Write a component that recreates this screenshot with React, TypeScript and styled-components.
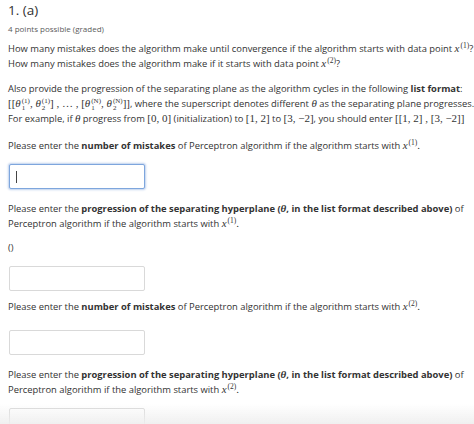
import styled, { createGlobalStyle } from 'styled-components'

const GlobalStyle = createGlobalStyle`
  html, body {
    margin: 0;
    padding: 0;
    background: #fff;
    overflow: hidden;
  }
  body {
    font-family: 'Open Sans', 'Noto Sans', sans-serif;
    color: #333;
  }
`

const Page = styled.div`
  width: 474px;
  padding: 2px 0 0 8px;
  box-sizing: border-box;
`

const Title = styled.h2`
  margin: 0;
  font-size: 13.5px;
  font-weight: 400;
  line-height: 16px;
  color: #313131;
`

const Points = styled.div`
  margin-top: 3px;
  font-size: 8px;
  line-height: 15px;
  color: #5b5b5b;
`

const Para = styled.p<{ $gap: number }>`
  margin: ${({ $gap }) => $gap}px 0 0;
  font-size: 9.4px;
  line-height: 15px;
`

const Line = styled.span`
  display: block;
  white-space: nowrap;
  height: 15px;
`

const M = styled.span`
  font-family: 'Liberation Serif', 'DejaVu Serif', serif;
  font-size: 11px;
`

const Mi = styled(M)`
  font-style: italic;
`

const Sup = styled.sup`
  font-family: 'Liberation Serif', 'DejaVu Serif', serif;
  font-size: 7.5px;
  line-height: 0;
  vertical-align: 4px;
  font-style: normal;
  margin-left: 1px;
`

const Scripts = styled.span`
  display: inline-block;
  vertical-align: -3px;
  margin-left: 1px;
  font-family: 'Liberation Serif', 'DejaVu Serif', serif;
  font-size: 7px;
  line-height: 7px;

  & > span {
    display: block;
  }
`

const Answer = styled.input<{ $focused?: boolean; $gap: number }>`
  display: block;
  margin: ${({ $gap }) => $gap}px 0 0 1px;
  width: 136px;
  height: 25px;
  box-sizing: border-box;
  padding: 0 6px;
  font-family: 'Open Sans', sans-serif;
  font-size: 9px;
  color: #333;
  background: #fff;
  border-radius: 2px;
  outline: none;
  border: 1px solid ${({ $focused }) => ($focused ? '#7ea6dd' : '#d9d9d9')};
  box-shadow: ${({ $focused }) =>
    $focused ? '0 0 2px 1px rgba(110, 150, 215, 0.45)' : 'none'};
`

const Caret = styled.span`
  position: absolute;
  left: 8px;
  top: 7px;
  width: 1px;
  height: 12px;
  background: #444;
`

const FocusWrap = styled.div`
  position: relative;
`

const Preview = styled.div`
  margin-top: 9px;
  font-size: 9.4px;
  line-height: 15px;
`

const FooterShade = styled.div`
  position: fixed;
  left: 0;
  right: 0;
  bottom: 0;
  height: 20px;
  background: linear-gradient(to bottom, rgba(245, 245, 245, 0), rgba(238, 238, 238, 0.9));
  pointer-events: none;
`

const X = ({ n }: { n: string }) => (
  <>
    <Mi>x</Mi>
    <Sup>({n})</Sup>
  </>
)

const Theta = ({ i, s }: { i: string; s: string }) => (
  <>
    <Mi>θ</Mi>
    <Scripts>
      <span>({s})</span>
      <span>{i}</span>
    </Scripts>
  </>
)

const MistakesPrompt = ({ n, gap }: { n: string; gap: number }) => (
  <Para $gap={gap}>
    Please enter the <b>number of mistakes</b> of Perceptron algorithm if the algorithm
    starts with <X n={n} />
    <M>.</M>
  </Para>
)

const ProgressionPrompt = ({ n, gap }: { n: string; gap: number }) => (
  <Para $gap={gap}>
    <Line>
      Please enter the{' '}
      <b>
        progression of the separating hyperplane (<Mi>θ</Mi>, in the list format described
        above)
      </b>{' '}
      of
    </Line>
    <Line>
      Perceptron algorithm if the algorithm starts with <X n={n} />
      <M>.</M>
    </Line>
  </Para>
)

export default function App() {
  return (
    <Page>
      <GlobalStyle />
      <Title>1. (a)</Title>
      <Points>4 points possible (graded)</Points>

      <Para $gap={5}>
        <Line>
          How many mistakes does the algorithm make until convergence if the algorithm starts
          with data point <X n="1" />?
        </Line>
        <Line>
          How many mistakes does the algorithm make if it starts with data point <X n="2" />?
        </Line>
      </Para>

      <Para $gap={10}>
        <Line>
          Also provide the progression of the separating plane as the algorithm cycles in the
          following <b>list format</b>:
        </Line>
        <Line>
          <M>[[</M>
          <Theta i="1" s="1" />
          <M>, </M>
          <Theta i="2" s="1" />
          <M>] , … , [</M>
          <Theta i="1" s="N" />
          <M>, </M>
          <Theta i="2" s="N" />
          <M>]]</M>, where the superscript denotes different <Mi>θ</Mi> as the separating plane
          progresses.
        </Line>
        <Line>
          For example, if <Mi>θ</Mi> progress from <M>[0, 0]</M> (initialization) to{' '}
          <M>[1, 2]</M> to <M>[3, −2]</M>, you should enter <M>[[1, 2] , [3, −2]]</M>
        </Line>
      </Para>

      <MistakesPrompt n="1" gap={12} />
      <FocusWrap>
        <Answer $focused $gap={11} readOnly />
        <Caret />
      </FocusWrap>

      <ProgressionPrompt n="1" gap={12} />
      <Preview>()</Preview>
      <Answer $gap={11} readOnly />

      <MistakesPrompt n="2" gap={8} />
      <Answer $gap={16} readOnly />

      <ProgressionPrompt n="2" gap={12} />
      <Answer $gap={11} readOnly />

      <FooterShade />
    </Page>
  )
}
